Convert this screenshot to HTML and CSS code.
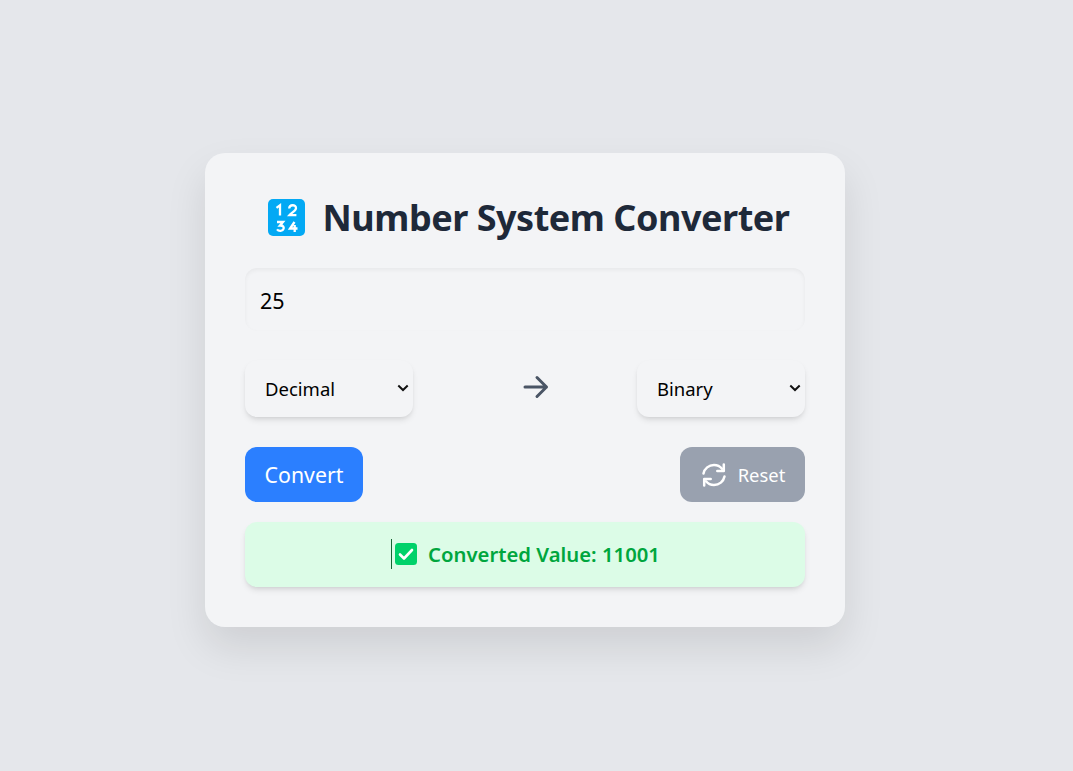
FILE: index.html
```html
<!DOCTYPE html>
<html lang="en">
<head>
<meta charset="utf-8">
<title>Number System Converter</title>
<link rel="stylesheet" href="styles.css">
</head>
<body>
<main class="card">
  <h1 class="title">
    <svg class="title-icon" viewBox="0 0 37 37" aria-hidden="true">
      <rect width="37" height="37" rx="5" fill="#03a9f4"/>
      <g fill="none" stroke="#fff" stroke-width="2.300">
        <path d="M8.500 8.800 12 6.200V16.500"/>
        <path d="M21.200 9.500c.2-4.300 6.800-4.300 6.800-.3 0 2.700-4 3.800-6.600 7h7"/>
        <path d="M9 23h6l-3 3.500c3.400-.2 4 1.800 3.600 3.300-.7 2.500-4.900 2.700-6.600.6"/>
        <path d="M26.500 23 22 29.500h7.500M26.700 26v7"/>
      </g>
    </svg>
    <span>Number System Converter</span>
  </h1>
  <input class="number-input" type="text" value="25">
  <div class="select-row">
    <select class="base-select"><option>Decimal</option><option>Binary</option></select>
    <svg class="arrow" viewBox="0 0 26 24" aria-hidden="true">
      <path d="M2 12h21.500M14 2.500l9.500 9.500-9.500 9.500" fill="none" stroke="#4a5565" stroke-width="3" stroke-linecap="round" stroke-linejoin="round"/>
    </svg>
    <select class="base-select"><option>Binary</option><option>Decimal</option></select>
  </div>
  <div class="button-row">
    <button class="btn btn-convert">Convert</button>
    <button class="btn btn-reset">
      <svg class="reset-icon" viewBox="0 0 24 24" aria-hidden="true">
        <path d="M1.500 10.500C2.500 5.500 6.800 2 12 2c3.300 0 6 1.300 8 3.800M22.500 13.500C21.500 18.500 17.200 22 12 22c-3.300 0-6-1.300-8-3.800" fill="none" stroke="#fff" stroke-width="2.500" stroke-linecap="round"/>
        <path d="M21.800 1.500v6.500h-6.500M2.200 22.500v-6.500h6.500" fill="none" stroke="#fff" stroke-width="2.500" stroke-linecap="round" stroke-linejoin="round"/>
      </svg>
      <span>Reset</span>
    </button>
  </div>
  <div class="result">
    <span class="caret"></span>
    <svg class="check" viewBox="0 0 22 22" aria-hidden="true">
      <rect width="22" height="22" rx="3.500" fill="#00d26a"/>
      <path d="M5 11.500l4 4 8-8.500" fill="none" stroke="#fff" stroke-width="2.600" stroke-linecap="round" stroke-linejoin="round"/>
    </svg>
    <span class="result-text">Converted Value: 11001</span>
  </div>
</main>
</body>
</html>
```
FILE: styles.css
```css
* { box-sizing: border-box; }
html, body { height: 100%; }
body {
  margin: 0;
  padding: 9px 23px 0 0;
  background: #e5e7eb;
  display: flex;
  align-items: center;
  justify-content: center;
  font-family: "Noto Sans", "Open Sans", sans-serif;
}
.card {
  width: 640px;
  height: 474px;
  padding: 40px;
  background: #f3f4f6;
  border-radius: 20px;
  box-shadow: 0 20px 40px rgba(0,0,0,.1);
}
.title {
  margin: 2px 0 28px;
  padding-left: 7px;
  height: 45px;
  display: flex;
  align-items: center;
  justify-content: center;
  gap: 18px;
  font-size: 36px;
  font-weight: 700;
  letter-spacing: -.48px;
  line-height: 45px;
  color: #1e2939;
  white-space: nowrap;
}
.title-icon { width: 37px; height: 37px; flex: none; }
.number-input {
  display: block;
  width: 100%;
  height: 63px;
  padding: 2px 15px 0;
  border: 0;
  border-radius: 12px;
  background: #f3f4f6;
  box-shadow: inset 0 2px 4px rgba(0,0,0,.05);
  font: 400 21.500px "Noto Sans", sans-serif;
  color: #000;
  outline: none;
}
.select-row {
  margin-top: 29px;
  display: flex;
  align-items: center;
  justify-content: space-between;
}
.base-select {
  appearance: none;
  width: 168px;
  height: 57px;
  padding: 0 16px 0 20px;
  border: 0;
  border-radius: 12px;
  background: #f3f4f6 url("data:image/svg+xml,%3Csvg xmlns='http://www.w3.org/2000/svg' viewBox='0 0 12 8'%3E%3Cpath d='M1.300 1.500 6 6l4.700-4.500' fill='none' stroke='%23111' stroke-width='2'/%3E%3C/svg%3E") no-repeat right 4px top 24px / 12px 8px;
  box-shadow: 0 4px 6px -1px rgba(0,0,0,.1), 0 2px 4px -2px rgba(0,0,0,.1);
  font: 400 18.500px "Noto Sans", sans-serif;
  color: #000;
}
.arrow { width: 26px; height: 24px; flex: none; margin: -3px 0 0 21px; }
.button-row {
  margin-top: 30px;
  display: flex;
  justify-content: space-between;
}
.btn {
  height: 55px;
  border: 0;
  border-radius: 12px;
  color: #fff;
  font-family: "Noto Sans", sans-serif;
  display: flex;
  align-items: center;
}
.btn-convert { width: 118px; justify-content: center; background: #2b7fff; font-size: 21.300px; }
.btn-reset { width: 125px; justify-content: center; gap: 12px; padding: 0 0 0 2px; background: #99a1af; font-size: 18.400px; }
.reset-icon { width: 24px; height: 24px; flex: none; }
.result {
  margin-top: 20px;
  padding: 0 0 2px 1px;
  height: 65px;
  background: #dcfce7;
  border-radius: 12px;
  box-shadow: 0 4px 6px -1px rgba(0,0,0,.1), 0 2px 4px -2px rgba(0,0,0,.1);
  display: flex;
  align-items: center;
  justify-content: center;
  color: #00a63e;
  font-size: 20.300px;
  font-weight: 600;
}
.caret { width: 1px; height: 30px; background: #166534; margin-right: 3px; }
.check { width: 22px; height: 22px; flex: none; margin-right: 11px; }
```
